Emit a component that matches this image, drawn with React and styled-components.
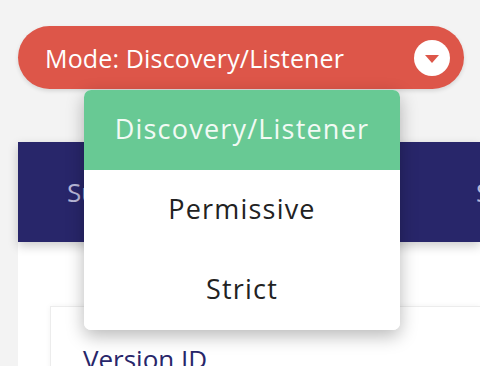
import React, { useState } from "react"
import styled, { createGlobalStyle } from "styled-components"

const GlobalStyle = createGlobalStyle`
  html, body {
    margin: 0;
    padding: 0;
    background: #f3f3f3;
    font-family: "Open Sans", "Noto Sans", sans-serif;
    overflow: hidden;
  }
`

const modes = ["Discovery/Listener", "Permissive", "Strict"]

const App = () => {
  const [mode, setMode] = useState("Discovery/Listener")
  const [open, setOpen] = useState(true)

  return (
    <Page>
      <GlobalStyle />
      <SelectWrap>
        <ModeButton onClick={() => setOpen(!open)}>
          <span>Mode: {mode}</span>
          <Caret>
            <svg width="14" height="8" viewBox="0 0 14 8">
              <polygon points="0,0 14,0 7,8" fill="#dd5649" />
            </svg>
          </Caret>
        </ModeButton>
        {open && (
          <Menu>
            {modes.map(m => (
              <MenuItem
                key={m}
                selected={m === mode}
                onClick={() => {
                  setMode(m)
                  setOpen(false)
                }}
              >
                {m}
              </MenuItem>
            ))}
          </Menu>
        )}
      </SelectWrap>
      <Tabs>
        <Tab>Summary</Tab>
        <Tab>Settings</Tab>
      </Tabs>
      <Panel>
        <Card>
          <CardTitle>Version ID</CardTitle>
        </Card>
      </Panel>
    </Page>
  )
}

const Page = styled.div`
  padding: 26px 0 0 18px;
  height: 366px;
  box-sizing: border-box;
  overflow: hidden;
`
const SelectWrap = styled.div`
  position: relative;
  width: 446px;
  z-index: 2;
`
const ModeButton = styled.div`
  height: 63px;
  border-radius: 32px;
  background: #dd5649;
  color: #fff;
  display: flex;
  align-items: center;
  justify-content: space-between;
  padding: 0 14px 0 27px;
  box-sizing: border-box;
  font-size: 25px;
  letter-spacing: 0.15px;
  cursor: pointer;
  box-shadow: 0 2px 4px rgba(0, 0, 0, 0.12);
`
const Caret = styled.div`
  width: 36px;
  height: 36px;
  border-radius: 50%;
  background: #fff;
  display: flex;
  align-items: center;
  justify-content: center;
  & svg {
    margin-top: 2px;
  }
`
const Menu = styled.div`
  position: absolute;
  top: 64px;
  left: 66px;
  width: 316px;
  border-radius: 7px;
  overflow: hidden;
  background: #fff;
  box-shadow: 0 6px 18px rgba(0, 0, 0, 0.28);
`
const MenuItem = styled.div`
  height: 80px;
  display: flex;
  align-items: center;
  justify-content: center;
  padding-bottom: 3px;
  box-sizing: border-box;
  font-size: 27px;
  letter-spacing: 1.2px;
  color: ${props => (props.selected ? "#f2faf4" : "#222")};
  background: ${props => (props.selected ? "#68c994" : "#fff")};
  cursor: pointer;
`
const Tabs = styled.div`
  margin-top: 53px;
  height: 100px;
  background: #28266a;
  display: flex;
  box-shadow: 0 4px 10px rgba(0, 0, 0, 0.2);
  position: relative;
  z-index: 1;
`
const Tab = styled.div`
  flex: 0 0 409px;
  box-sizing: border-box;
  padding-left: 49px;
  display: flex;
  align-items: center;
  color: #b9b8d8;
  font-size: 26px;
  white-space: nowrap;
`
const Panel = styled.div`
  background: #fff;
  height: 200px;
  padding: 64px 0 0 32px;
  box-sizing: border-box;
`
const Card = styled.div`
  border: 1px solid #ececec;
  border-right: none;
  background: #fff;
  height: 120px;
  padding: 34px 0 0 32px;
  box-shadow: 0 0 6px rgba(0, 0, 0, 0.05);
`
const CardTitle = styled.div`
  color: #28266a;
  font-size: 26px;
`

export default App
